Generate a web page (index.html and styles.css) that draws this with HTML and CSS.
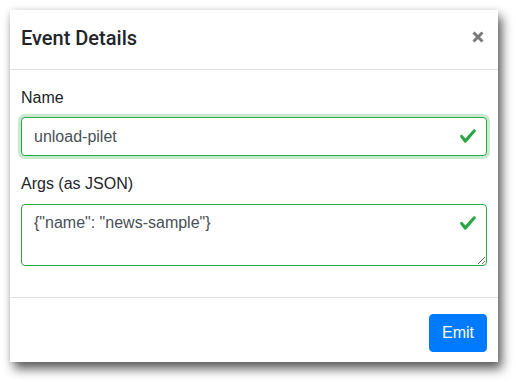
FILE: index.html
```html
<!DOCTYPE html>
<html>
<head>
<meta charset="utf-8">
<link rel="stylesheet" href="styles.css">
</head>
<body>
<div class="modal">
  <div class="modal-header">
    <h5 class="modal-title">Event Details</h5>
    <button class="close" type="button" aria-label="Close">
      <svg width="12" height="12" viewBox="0 0 12 12"><path d="M1.5 1.5 L10.5 10.5 M10.5 1.5 L1.5 10.5" stroke="#7a7a7a" stroke-width="3" stroke-linecap="butt"/></svg>
    </button>
  </div>
  <div class="modal-body">
    <div class="form-group">
      <label class="label">Name</label>
      <div class="field">
        <input class="form-control is-valid focused" type="text" value="unload-pilet">
        <svg class="valid-icon" width="18" height="18" viewBox="0 0 8 8"><path fill="#28a745" d="M2.3 6.73L.6 4.53c-.4-1.04.46-1.4 1.1-.8l1.1 1.4 3.4-3.8c.6-.63 1.6-.27 1.2.7l-4 4.6c-.43.5-.8.4-1.1.1z"/></svg>
      </div>
    </div>
    <div class="form-group last">
      <label class="label label-args">Args (as JSON)</label>
      <div class="field">
        <textarea class="form-control is-valid textarea" rows="2">{"name": "news-sample"}</textarea>
        <svg class="valid-icon" width="18" height="18" viewBox="0 0 8 8"><path fill="#28a745" d="M2.3 6.73L.6 4.53c-.4-1.04.46-1.4 1.1-.8l1.1 1.4 3.4-3.8c.6-.63 1.6-.27 1.2.7l-4 4.6c-.43.5-.8.4-1.1.1z"/></svg>
      </div>
    </div>
  </div>
  <div class="modal-footer">
    <button class="btn" type="button">Emit</button>
  </div>
</div>
</body>
</html>
```
FILE: styles.css
```css
html, body {
  margin: 0;
  padding: 0;
  background: #ffffff;
}
body {
  min-height: 382px;
  padding-top: 10px;
  box-sizing: border-box;
  font-family: "Liberation Sans", Arial, sans-serif;
  font-size: 16px;
  line-height: 24px;
  color: #212529;
}
.modal {
  margin: 0 0 0 10px;
  width: 488px;
  background: #ffffff;
  box-shadow: 4px 7px 10px rgba(0, 0, 0, 0.62), 0 0 6px rgba(0, 0, 0, 0.12);
}
.modal-header {
  display: flex;
  justify-content: space-between;
  align-items: flex-start;
  padding: 16px 14px 19px 11px;
  border-bottom: 1px solid #dee2e6;
}
.modal-title {
  margin: 0;
  font-family: Roboto, "Liberation Sans", sans-serif;
  font-weight: 500;
  font-size: 20px;
  line-height: 24px;
  color: #212529;
}
.close {
  margin: 5px 0 0 0;
  padding: 0;
  border: 0;
  background: transparent;
  width: 12px;
  height: 12px;
  display: block;
}
.close svg {
  display: block;
}
.modal-body {
  padding: 16px 11px 15px 11px;
}
.form-group {
  margin-bottom: 16px;
}
.label {
  display: block;
  margin-bottom: 7px;
}
.label-args {
  margin-bottom: 8px;
}
.field {
  position: relative;
}
.form-control {
  display: block;
  box-sizing: border-box;
  width: 100%;
  margin: 0;
  height: 39px;
  padding: 6px 36px 6px 12px;
  font-family: "Liberation Sans", Arial, sans-serif;
  font-size: 16px;
  line-height: 24px;
  color: #495057;
  background: #ffffff;
  border: 1px solid #28a745;
  border-radius: 4px;
  outline: none;
}
.focused {
  box-shadow: 0 0 0 3px rgba(40, 167, 69, 0.25);
}
.textarea {
  height: 62px;
  resize: vertical;
  overflow: auto;
}
.valid-icon {
  position: absolute;
  right: 10px;
  top: 10px;
}
.modal-footer {
  display: flex;
  justify-content: flex-end;
  padding: 16px 11px 10px 11px;
  border-top: 1px solid #dee2e6;
}
.btn {
  height: 38px;
  padding: 6px 12px;
  font-family: "Liberation Sans", Arial, sans-serif;
  font-size: 16px;
  line-height: 24px;
  color: #ffffff;
  background: #007bff;
  border: 1px solid #007bff;
  border-radius: 4px;
}
```
